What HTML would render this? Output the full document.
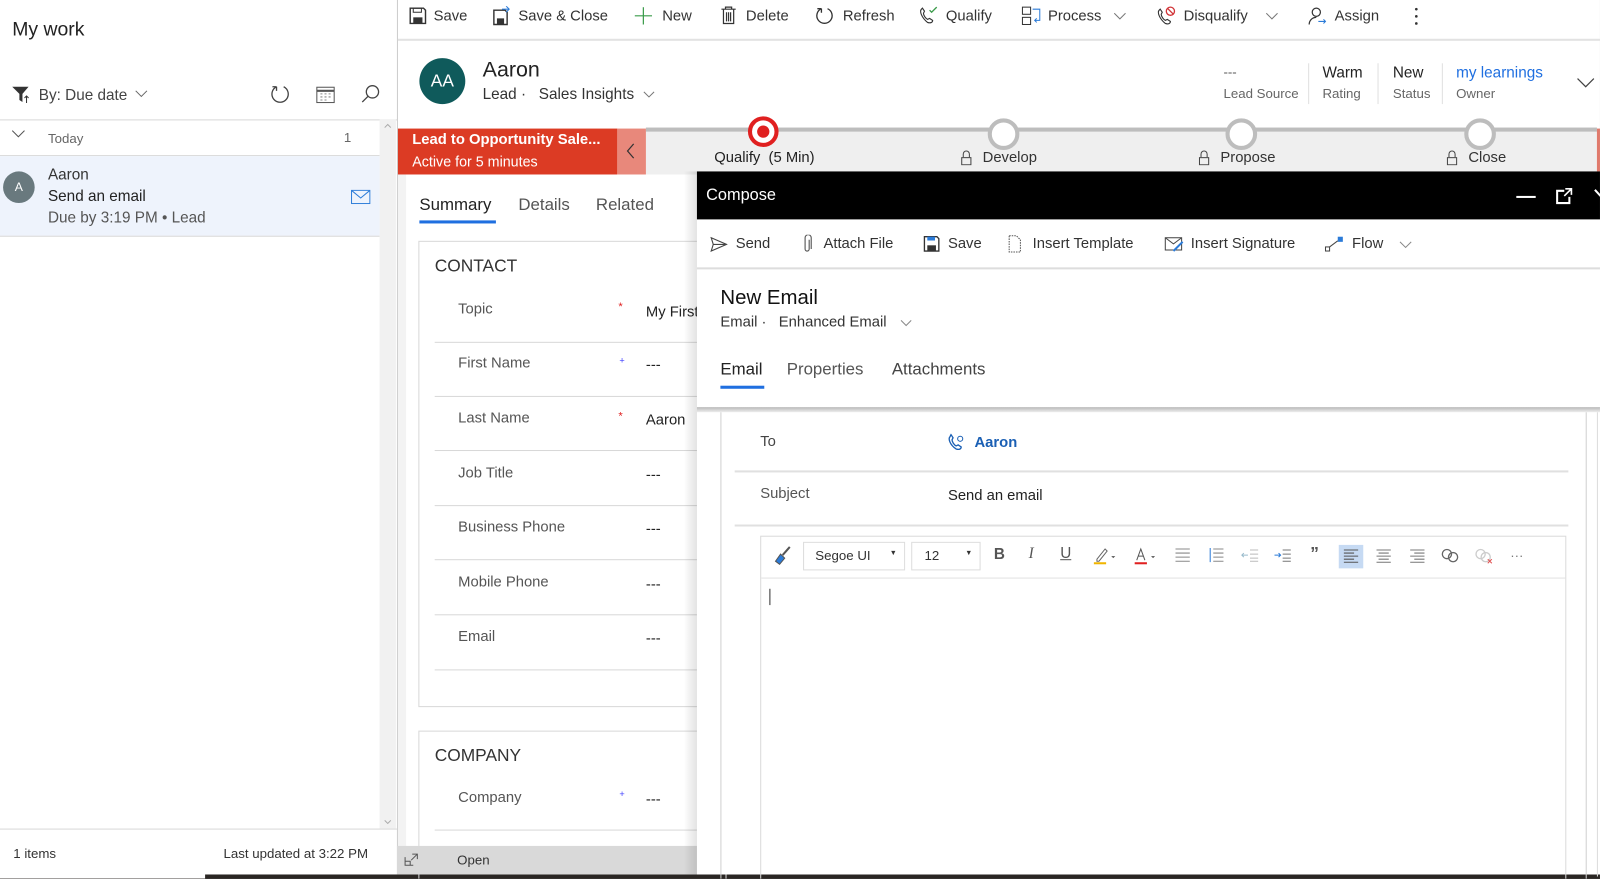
<!DOCTYPE html>
<html><head><meta charset="utf-8"><style>
html,body{margin:0;padding:0;width:1600px;height:879px;overflow:hidden;background:#2a2623}
#w{position:absolute;left:0;top:0;width:1568px;height:861px;transform:scale(1.0204);transform-origin:0 0;background:#fff;font-family:"Liberation Sans",sans-serif;color:#333;overflow:hidden}
.a{position:absolute;white-space:nowrap}
.hl{position:absolute;height:1px;background:#d8d8d8}
.vl{position:absolute;width:1px;background:#d8d8d8}
.tb{font-size:14.5px;color:#333}
.lab{font-size:14.5px;color:#555}
.val{font-size:14.5px;color:#222}
svg{position:absolute}
.cv{display:inline-block;position:relative;width:11px;height:7px;margin-left:4px;vertical-align:middle}
.cv svg{left:0;top:0}
</style></head><body><div id="w">

<!-- LEFT PANEL -->
<div class="a" style="left:12px;top:19px;font-size:19px;color:#222">My work</div>
<svg style="left:11px;top:84px" width="20" height="18" viewBox="0 0 20 18"><path d="M1 1h16l-6 7v8l-3-2V8z" fill="#333"/><path d="M15 17V10m-2 2l2-2 2 2" stroke="#333" fill="none"/></svg>
<div class="a" style="left:38px;top:85px;font-size:15px;color:#444">By: Due date</div>
<svg style="left:132px;top:88px" width="13" height="8" viewBox="0 0 13 8"><path d="M1 1l5.5 5.5L12 1" fill="none" stroke="#666"/></svg>
<svg style="left:264px;top:82px" width="22" height="22" viewBox="0 0 22 22"><path d="M7 3A8 8 0 1 0 14 3" stroke="#444" fill="none" stroke-width="1.3"/><path d="M7 3v4M7 3H3" stroke="#444" fill="none" stroke-width="1.3"/></svg>
<svg style="left:309px;top:83px" width="20" height="19" viewBox="0 0 20 19"><rect x="1.5" y="2.5" width="17" height="15" fill="none" stroke="#555"/><path d="M1.5 6h17" stroke="#555" stroke-width="2"/><path d="M5 9h2M9 9h2M13 9h2M5 12h2M9 12h2M13 12h2M5 15h2M9 15h2" stroke="#888"/></svg>
<svg style="left:353px;top:82px" width="20" height="20" viewBox="0 0 20 20"><circle cx="12" cy="8" r="6" fill="none" stroke="#444" stroke-width="1.3"/><path d="M8 12L2 18" stroke="#444" stroke-width="1.3"/></svg>
<div class="hl" style="left:0;top:117px;width:389px"></div>
<svg style="left:11px;top:127px" width="14" height="9" viewBox="0 0 14 9"><path d="M1 1l6 6 6-6" fill="none" stroke="#555"/></svg>
<div class="a" style="left:47px;top:128px;font-size:13px;color:#666">Today</div>
<div class="a" style="left:337px;top:127px;font-size:13px;color:#666">1</div>
<div class="hl" style="left:0;top:152px;width:372px"></div>
<div class="a" style="left:0;top:153px;width:372px;height:78px;background:#eef3fc"></div>
<div class="hl" style="left:0;top:231px;width:372px"></div>
<div class="a" style="left:3px;top:168px;width:31px;height:31px;border-radius:50%;background:#69797e;color:#fff;font-size:12px;text-align:center;line-height:31px">A</div>
<div class="a" style="left:47px;top:163px;font-size:15px;color:#333">Aaron</div>
<div class="a" style="left:47px;top:184px;font-size:15px;color:#222">Send an email</div>
<div class="a" style="left:47px;top:205px;font-size:15px;color:#555">Due by 3:19 PM &bull; Lead</div>
<svg style="left:344px;top:186px" width="19" height="14" viewBox="0 0 19 14"><rect x=".5" y=".5" width="18" height="13" fill="none" stroke="#2b7bd8"/><path d="M1 1l8.5 7L18 1" fill="none" stroke="#2b7bd8"/></svg>
<div class="a" style="left:372px;top:117px;width:16px;height:695px;background:#f1f1f1"></div>
<svg style="left:376px;top:121px" width="8" height="5" viewBox="0 0 8 5"><path d="M1 4l3-3 3 3" fill="none" stroke="#aaa"/></svg>
<svg style="left:376px;top:803px" width="8" height="5" viewBox="0 0 8 5"><path d="M1 1l3 3 3-3" fill="none" stroke="#aaa"/></svg>
<div class="hl" style="left:0;top:812px;width:389px"></div>
<div class="a" style="left:13px;top:829px;font-size:13px;color:#333">1 items</div>
<div class="a" style="left:219px;top:829px;font-size:13px;color:#333">Last updated at 3:22 PM</div>
<div class="a" style="left:201px;top:857px;width:1367px;height:4px;background:#2a2623"></div>
<div class="vl" style="left:389px;top:0;height:857px;background:#ccc"></div>

<!-- TOP TOOLBAR -->
<div class="a" style="left:390px;top:38px;width:1178px;height:2px;background:#e2e2e2"></div>
<svg style="left:401px;top:7px" width="17" height="17" viewBox="0 0 17 17"><path d="M1 1h13l2 2v13H1z" fill="none" stroke="#333" stroke-width="1.4"/><rect x="4" y="10" width="9" height="6" fill="#333"/><rect x="4" y="1" width="8" height="4" fill="none" stroke="#333"/></svg>
<div class="a tb" style="left:425px;top:8px">Save</div>
<svg style="left:483px;top:6px" width="18" height="19" viewBox="0 0 18 19"><path d="M1 4h11l2 2v12H1z" fill="none" stroke="#333" stroke-width="1.4"/><rect x="4" y="12" width="7" height="6" fill="#333"/><path d="M9 3h7M13 0l3 3-3 3" stroke="#2b7bd8" fill="none"/></svg>
<div class="a tb" style="left:508px;top:8px">Save &amp; Close</div>
<svg style="left:622px;top:7px" width="17" height="17" viewBox="0 0 17 17"><path d="M8.5 0v17M0 8.5h17" stroke="#3a9b4a" stroke-width="1.2"/></svg>
<div class="a tb" style="left:649px;top:8px">New</div>
<svg style="left:706px;top:6px" width="16" height="18" viewBox="0 0 16 18"><path d="M1 3h14M5 3V1h6v2M3 3v14h10V3M6 6v9M8 6v9M10 6v9" fill="none" stroke="#333" stroke-width="1.2"/></svg>
<div class="a tb" style="left:731px;top:8px">Delete</div>
<svg style="left:799px;top:6px" width="19" height="19" viewBox="0 0 19 19"><path d="M6 2.5A7.5 7.5 0 1 0 12 2.5" stroke="#333" fill="none" stroke-width="1.3"/><path d="M6 2.5v4M6 2.5H2" stroke="#333" fill="none" stroke-width="1.3"/></svg>
<div class="a tb" style="left:826px;top:8px">Refresh</div>
<svg style="left:900px;top:6px" width="20" height="19" viewBox="0 0 20 19"><path d="M3 3c-2 2 0 8 6 13 3 1 5 0 5-2l-3-2-2 1c-2-1-4-4-4-6l1-2-2-3z" fill="none" stroke="#333" stroke-width="1.1"/><path d="M11 4l2 2 5-5" stroke="#3a9b4a" fill="none" stroke-width="1.3"/></svg>
<div class="a tb" style="left:927px;top:8px">Qualify</div>
<svg style="left:1001px;top:6px" width="20" height="19" viewBox="0 0 20 19"><rect x="1" y="1" width="8" height="7" fill="none" stroke="#333"/><rect x="1" y="11" width="8" height="7" fill="none" stroke="#333"/><path d="M11 3h7v11h-5M15 12l-2 2 2 2" fill="none" stroke="#2b7bd8"/></svg>
<div class="a tb" style="left:1027px;top:8px">Process</div>
<svg style="left:1091px;top:12px" width="13" height="8" viewBox="0 0 13 8"><path d="M1 1l5.5 5.5L12 1" fill="none" stroke="#777"/></svg>
<svg style="left:1133px;top:6px" width="20" height="19" viewBox="0 0 20 19"><path d="M3 4c-2 2 0 8 6 13 3 1 5 0 5-2l-3-2-2 1c-2-1-4-4-4-6l1-2-2-3z" fill="none" stroke="#333" stroke-width="1.1"/><circle cx="14" cy="5" r="4" fill="none" stroke="#d13438" stroke-width="1.3"/><path d="M11 2l6 6" stroke="#d13438" stroke-width="1.3"/></svg>
<div class="a tb" style="left:1160px;top:8px">Disqualify</div>
<svg style="left:1240px;top:12px" width="13" height="8" viewBox="0 0 13 8"><path d="M1 1l5.5 5.5L12 1" fill="none" stroke="#777"/></svg>
<svg style="left:1282px;top:6px" width="20" height="19" viewBox="0 0 20 19"><circle cx="8" cy="6" r="4" fill="none" stroke="#333" stroke-width="1.2"/><path d="M1 18c0-4 3-7 7-7" fill="none" stroke="#333" stroke-width="1.2"/><path d="M10 15h7M15 13l2 2-2 2" fill="none" stroke="#2b7bd8"/></svg>
<div class="a tb" style="left:1308px;top:8px">Assign</div>
<svg style="left:1386px;top:7px" width="4" height="18" viewBox="0 0 4 18"><circle cx="2" cy="2" r="1.3" fill="#333"/><circle cx="2" cy="9" r="1.3" fill="#333"/><circle cx="2" cy="16" r="1.3" fill="#333"/></svg>

<!-- HEADER -->
<div class="a" style="left:411px;top:57px;width:45px;height:45px;border-radius:50%;background:#0f5a5b;color:#fff;font-size:17px;text-align:center;line-height:45px">AA</div>
<div class="a" style="left:473px;top:57px;font-size:21px;color:#222">Aaron</div>
<div class="a" style="left:473px;top:84px;font-size:15px;color:#333">Lead &middot;&nbsp;&nbsp; Sales Insights</div>
<svg style="left:630px;top:89px" width="12" height="7" viewBox="0 0 12 7"><path d="M1 1l5 5 5-5" fill="none" stroke="#777"/></svg>
<div class="a" style="left:1199px;top:63px;font-size:13px;color:#555">---</div>
<div class="a" style="left:1199px;top:84px;font-size:13px;color:#666">Lead Source</div>
<div class="vl" style="left:1282px;top:62px;height:40px;background:#e0e0e0"></div>
<div class="a" style="left:1296px;top:63px;font-size:15px;color:#222">Warm</div>
<div class="a" style="left:1296px;top:84px;font-size:13px;color:#666">Rating</div>
<div class="vl" style="left:1350px;top:62px;height:40px;background:#e0e0e0"></div>
<div class="a" style="left:1365px;top:63px;font-size:15px;color:#222">New</div>
<div class="a" style="left:1365px;top:84px;font-size:13px;color:#666">Status</div>
<div class="vl" style="left:1413px;top:62px;height:40px;background:#e0e0e0"></div>
<div class="a" style="left:1427px;top:63px;font-size:15px;color:#1f6fe0">my learnings</div>
<div class="a" style="left:1427px;top:84px;font-size:13px;color:#666">Owner</div>
<svg style="left:1545px;top:75px" width="18" height="12" viewBox="0 0 18 12"><path d="M1 2l8 8 8-8" fill="none" stroke="#444" stroke-width="1.2"/></svg>

<!-- BPF -->
<div class="a" style="left:633px;top:126px;width:932px;height:45px;background:#efefef"></div>
<div class="a" style="left:633px;top:125px;width:932px;height:4px;background:#bdbdbd"></div>
<div class="a" style="left:1565px;top:126px;width:3px;height:45px;background:#e07a6c"></div>
<div class="a" style="left:390px;top:126px;width:215px;height:45px;background:#dc3b24"></div>
<div class="a" style="left:404px;top:129px;font-size:14.5px;color:#fff;font-weight:bold">Lead to Opportunity Sale...</div>
<div class="a" style="left:404px;top:150px;font-size:14px;color:#fff">Active for 5 minutes</div>
<div class="a" style="left:605px;top:126px;width:28px;height:45px;background:#e8887b"></div>
<svg style="left:613px;top:140px" width="10" height="16" viewBox="0 0 10 16"><path d="M8 1L2 8l6 7" fill="none" stroke="#333" stroke-width="1.2"/></svg>
<div class="a" style="left:733px;top:114px;width:22px;height:22px;border-radius:50%;border:4px solid #e02020;background:#fff"></div>
<div class="a" style="left:742px;top:123px;width:12px;height:12px;border-radius:50%;background:#e02020"></div>
<div class="a" style="left:700px;top:147px;font-size:14.5px;color:#222">Qualify&nbsp; (5 Min)</div>
<div class="a" style="left:968px;top:116px;width:23px;height:23px;border-radius:50%;border:4px solid #bdbdbd;background:#fff"></div>
<div class="a" style="left:1201px;top:116px;width:23px;height:23px;border-radius:50%;border:4px solid #bdbdbd;background:#fff"></div>
<div class="a" style="left:1435px;top:116px;width:23px;height:23px;border-radius:50%;border:4px solid #bdbdbd;background:#fff"></div>
<svg style="left:941px;top:147px" width="12" height="15" viewBox="0 0 12 15"><path d="M3 7V4a3 3 0 0 1 6 0v3" fill="none" stroke="#444"/><rect x="1.5" y="7.5" width="9" height="7" fill="none" stroke="#444"/></svg>
<div class="a" style="left:963px;top:147px;font-size:14.5px;color:#333">Develop</div>
<svg style="left:1174px;top:147px" width="12" height="15" viewBox="0 0 12 15"><path d="M3 7V4a3 3 0 0 1 6 0v3" fill="none" stroke="#444"/><rect x="1.5" y="7.5" width="9" height="7" fill="none" stroke="#444"/></svg>
<div class="a" style="left:1196px;top:147px;font-size:14.5px;color:#333">Propose</div>
<svg style="left:1417px;top:147px" width="12" height="15" viewBox="0 0 12 15"><path d="M3 7V4a3 3 0 0 1 6 0v3" fill="none" stroke="#444"/><rect x="1.5" y="7.5" width="9" height="7" fill="none" stroke="#444"/></svg>
<div class="a" style="left:1439px;top:147px;font-size:14.5px;color:#333">Close</div>

<!-- FORM -->
<div class="a" style="left:390px;top:171px;width:8px;height:658px;background:#f3f3f3"></div>
<div class="a" style="left:411px;top:192px;font-size:16.5px;color:#222">Summary</div>
<div class="a" style="left:411px;top:216px;width:75px;height:3px;background:#1f6fe0"></div>
<div class="a" style="left:508px;top:192px;font-size:16.5px;color:#555">Details</div>
<div class="a" style="left:584px;top:192px;font-size:16.5px;color:#555">Related</div>
<div class="a" style="left:410px;top:236px;width:300px;height:455px;border:1px solid #d8d8d8"></div>
<div class="a" style="left:426px;top:251px;font-size:17px;color:#333">CONTACT</div>
<div class="a lab" style="left:449px;top:295px">Topic</div><div class="a" style="left:606px;top:295px;color:#e02020;font-size:11px">*</div><div class="a val" style="left:633px;top:298px">My First</div>
<div class="hl" style="left:426px;top:335px;width:270px"></div>
<div class="a lab" style="left:449px;top:348px">First Name</div><div class="a" style="left:607px;top:348px;color:#4040ff;font-size:9px">+</div><div class="a val" style="left:633px;top:350px">---</div>
<div class="hl" style="left:426px;top:388px;width:270px"></div>
<div class="a lab" style="left:449px;top:402px">Last Name</div><div class="a" style="left:606px;top:402px;color:#e02020;font-size:11px">*</div><div class="a val" style="left:633px;top:404px">Aaron</div>
<div class="hl" style="left:426px;top:441px;width:270px"></div>
<div class="a lab" style="left:449px;top:456px">Job Title</div><div class="a val" style="left:633px;top:458px">---</div>
<div class="hl" style="left:426px;top:495px;width:270px"></div>
<div class="a lab" style="left:449px;top:509px">Business Phone</div><div class="a val" style="left:633px;top:511px">---</div>
<div class="hl" style="left:426px;top:548px;width:270px"></div>
<div class="a lab" style="left:449px;top:563px">Mobile Phone</div><div class="a val" style="left:633px;top:565px">---</div>
<div class="hl" style="left:426px;top:602px;width:270px"></div>
<div class="a lab" style="left:449px;top:616px">Email</div><div class="a val" style="left:633px;top:618px">---</div>
<div class="hl" style="left:426px;top:656px;width:270px"></div>
<div class="a" style="left:410px;top:716px;width:300px;height:150px;border:1px solid #d8d8d8"></div>
<div class="a" style="left:426px;top:731px;font-size:17px;color:#333">COMPANY</div>
<div class="a lab" style="left:449px;top:774px">Company</div><div class="a" style="left:607px;top:773px;color:#4040ff;font-size:9px">+</div><div class="a val" style="left:633px;top:776px">---</div>
<div class="hl" style="left:426px;top:813px;width:270px"></div>
<div class="a" style="left:389px;top:829px;width:295px;height:28px;background:#d9d9d9"></div>
<svg style="left:396px;top:836px" width="14" height="13" viewBox="0 0 14 13"><path d="M1 4v8h8M1 8h5v4M8 1h5v5M13 1L7 7" fill="none" stroke="#555"/></svg>
<div class="a" style="left:448px;top:835px;font-size:13px;color:#333">Open</div>

<!-- COMPOSE -->
<div class="a" style="left:670px;top:168px;width:14px;height:689px;background:linear-gradient(to right,rgba(0,0,0,0),rgba(0,0,0,.12))"></div>
<div class="a" style="left:683px;top:168px;width:885px;height:689px;background:#fff"></div>
<div class="a" style="left:683px;top:168px;width:885px;height:47px;background:#000"></div>
<div class="a" style="left:692px;top:183px;font-size:16px;color:#fff">Compose</div>
<div class="a" style="left:1486px;top:192px;width:19px;height:2px;background:#fff"></div>
<svg style="left:1524px;top:184px" width="18" height="17" viewBox="0 0 18 17"><path d="M9 3H2v12h12V9" fill="none" stroke="#fff" stroke-width="2"/><path d="M10 1h6v6M16 1l-7 7" fill="none" stroke="#fff" stroke-width="1.6"/></svg>
<svg style="left:1562px;top:184px" width="8" height="17" viewBox="0 0 8 17"><path d="M1 2l12 13" stroke="#fff" stroke-width="2"/></svg>
<div class="a" style="left:683px;top:262px;width:885px;height:2px;background:#ddd"></div>
<svg style="left:696px;top:232px" width="17" height="15" viewBox="0 0 17 15"><path d="M1 1l15 6.5L1 14l2-6.5z M3 7.5h13" fill="none" stroke="#444" stroke-width="1.1"/></svg>
<div class="a tb" style="left:721px;top:231px">Send</div>
<svg style="left:786px;top:230px" width="10" height="19" viewBox="0 0 10 19"><path d="M7 5v9a2 2 0 0 1-4 0V3a3 3 0 0 1 6 0v11" fill="none" stroke="#555" stroke-width="1.1"/></svg>
<div class="a tb" style="left:807px;top:231px">Attach File</div>
<svg style="left:905px;top:231px" width="16" height="16" viewBox="0 0 17 17"><path d="M1 1h13l2 2v13H1z" fill="none" stroke="#333" stroke-width="1.4"/><rect x="4" y="10" width="9" height="6" fill="#333"/><rect x="4" y="1" width="8" height="4" fill="#2b7bd8"/></svg>
<div class="a tb" style="left:929px;top:231px">Save</div>
<svg style="left:988px;top:230px" width="13" height="18" viewBox="0 0 13 18"><path d="M1 1h7l4 4v12H1z" fill="none" stroke="#555" stroke-dasharray="1.5 1"/></svg>
<div class="a tb" style="left:1012px;top:231px">Insert Template</div>
<svg style="left:1141px;top:231px" width="20" height="17" viewBox="0 0 20 17"><rect x="1" y="2" width="16" height="12" fill="none" stroke="#444"/><path d="M1 2l8 6 8-6" fill="none" stroke="#444"/><path d="M9 15l9-9" stroke="#2b7bd8" stroke-width="2"/></svg>
<div class="a tb" style="left:1167px;top:231px">Insert Signature</div>
<svg style="left:1298px;top:231px" width="19" height="16" viewBox="0 0 19 16"><rect x="1" y="11" width="4" height="4" fill="none" stroke="#444"/><rect x="13" y="1" width="5" height="5" fill="#2b7bd8"/><path d="M5 11l8-6" stroke="#444"/></svg>
<div class="a tb" style="left:1325px;top:231px">Flow</div>
<svg style="left:1371px;top:236px" width="13" height="8" viewBox="0 0 13 8"><path d="M1 1l5.5 5.5L12 1" fill="none" stroke="#888"/></svg>

<div class="a" style="left:706px;top:281px;font-size:20px;color:#111">New Email</div>
<div class="a" style="left:706px;top:308px;font-size:14.5px;color:#333">Email &middot;&nbsp;&nbsp; Enhanced Email</div>
<svg style="left:882px;top:313px" width="12" height="7" viewBox="0 0 12 7"><path d="M1 1l5 5 5-5" fill="none" stroke="#888"/></svg>
<div class="a" style="left:706px;top:353px;font-size:16.5px;color:#222">Email</div>
<div class="a" style="left:706px;top:378px;width:43px;height:3px;background:#1f6fe0"></div>
<div class="a" style="left:771px;top:353px;font-size:16.5px;color:#555">Properties</div>
<div class="a" style="left:874px;top:353px;font-size:16.5px;color:#444">Attachments</div>
<div class="a" style="left:683px;top:399px;width:885px;height:5px;background:linear-gradient(#b8b8b8,#eee)"></div>
<div class="a" style="left:706px;top:404px;width:847px;height:470px;border-left:1px solid #d0d0d0;border-right:1px solid #d0d0d0"></div>
<div class="vl" style="left:1565px;top:404px;height:455px;background:#ddd"></div>
<div class="a" style="left:745px;top:425px;font-size:14.5px;color:#444">To</div>
<svg style="left:928px;top:425px" width="18" height="17" viewBox="0 0 18 17"><path d="M3 3c-2 2 0 8 6 12 3 1 5 0 5-2l-3-2-2 1c-2-1-4-4-4-6l1-2-2-3z" fill="none" stroke="#1a5fb4" stroke-width="1.3"/><circle cx="13" cy="5" r="2.5" fill="none" stroke="#1a5fb4"/></svg>
<div class="a" style="left:955px;top:426px;font-size:14.5px;color:#1a5fb4;font-weight:bold">Aaron</div>
<div class="hl" style="left:720px;top:461px;width:817px;background:#e0e0e0;height:2px"></div>
<div class="a" style="left:745px;top:476px;font-size:14.5px;color:#555">Subject</div>
<div class="a" style="left:929px;top:478px;font-size:14.5px;color:#222">Send an email</div>
<div class="hl" style="left:720px;top:514px;width:817px;background:#e0e0e0;height:2px"></div>

<!-- editor -->
<div class="a" style="left:745px;top:525px;width:788px;height:340px;border:1px solid #dadada"></div>
<div class="hl" style="left:746px;top:566px;width:788px;background:#e2e2e2"></div>
<svg style="left:759px;top:535px" width="18" height="19" viewBox="0 0 18 19"><path d="M15 1l-7 8" stroke="#555" stroke-width="2"/><path d="M6 8l4 4-5 6-4-3z" fill="#2b7bd8" stroke="#555"/></svg>
<div class="a" style="left:787px;top:531px;width:98px;height:26px;border:1px solid #ddd"></div>
<div class="a" style="left:799px;top:537px;font-size:13px;color:#333">Segoe UI</div>
<div class="a" style="left:872px;top:539px;font-size:7px;color:#333">&#9660;</div>
<div class="a" style="left:893px;top:531px;width:66px;height:26px;border:1px solid #ddd"></div>
<div class="a" style="left:906px;top:537px;font-size:13px;color:#333">12</div>
<div class="a" style="left:946px;top:539px;font-size:7px;color:#333">&#9660;</div>
<div class="a" style="left:974px;top:535px;font-size:15px;color:#555;font-weight:bold">B</div>
<div class="a" style="left:1008px;top:535px;font-size:15px;color:#555;font-style:italic;font-family:'Liberation Serif',serif">I</div>
<div class="a" style="left:1039px;top:534px;font-size:15px;color:#555;text-decoration:underline">U</div>
<svg style="left:1071px;top:535px" width="26" height="20" viewBox="0 0 26 20"><path d="M4 13l8-10 2 2-8 10H4z" fill="none" stroke="#666"/><rect x="1" y="16" width="12" height="2" fill="#f0b400"/><path d="M18 10l2 2 2-2z" fill="#555"/></svg>
<svg style="left:1111px;top:535px" width="26" height="20" viewBox="0 0 26 20"><path d="M3 14l4-11 4 11M4.5 10h5" fill="none" stroke="#555"/><rect x="1" y="16" width="12" height="2" fill="#e02020"/><path d="M17 10l2 2 2-2z" fill="#555"/></svg>
<svg style="left:1151px;top:537px" width="16" height="14" viewBox="0 0 16 14"><path d="M1 1h14M1 5h14M1 9h14M1 13h14" stroke="#888"/></svg>
<svg style="left:1184px;top:537px" width="16" height="14" viewBox="0 0 16 14"><path d="M5 1h10M5 5h10M5 9h10M5 13h10" stroke="#888"/><path d="M2 0v14" stroke="#2b7bd8"/></svg>
<svg style="left:1216px;top:538px" width="18" height="13" viewBox="0 0 18 13"><path d="M9 1h8M9 5h8M9 9h8M9 12h8" stroke="#bbb"/><path d="M7 6H1M3 4L1 6l2 2" stroke="#9bc" fill="none"/></svg>
<svg style="left:1248px;top:538px" width="18" height="13" viewBox="0 0 18 13"><path d="M9 1h8M9 5h8M9 9h8M9 12h8" stroke="#777"/><path d="M1 6h6M5 4l2 2-2 2" stroke="#2b7bd8" fill="none"/></svg>
<div class="a" style="left:1284px;top:533px;font-size:17px;color:#555;font-weight:bold">&#8221;</div>
<div class="a" style="left:1312px;top:534px;width:24px;height:23px;background:#c6daf3"></div>
<svg style="left:1316px;top:538px" width="16" height="14" viewBox="0 0 16 14"><path d="M1 1h14M1 4h10M1 7h14M1 10h10M1 13h14" stroke="#555"/></svg>
<svg style="left:1348px;top:538px" width="16" height="14" viewBox="0 0 16 14"><path d="M1 1h14M3 4h10M1 7h14M3 10h10M1 13h14" stroke="#777"/></svg>
<svg style="left:1381px;top:538px" width="16" height="14" viewBox="0 0 16 14"><path d="M1 1h14M5 4h10M1 7h14M5 10h10M1 13h14" stroke="#777"/></svg>
<svg style="left:1412px;top:537px" width="19" height="15" viewBox="0 0 19 15"><circle cx="6" cy="6" r="4.5" fill="none" stroke="#666" stroke-width="1.3"/><circle cx="12" cy="9" r="4.5" fill="none" stroke="#666" stroke-width="1.3"/></svg>
<svg style="left:1445px;top:537px" width="19" height="16" viewBox="0 0 19 16"><circle cx="6" cy="6" r="4.5" fill="none" stroke="#ccc" stroke-width="1.3"/><circle cx="11" cy="9" r="4.5" fill="none" stroke="#ccc" stroke-width="1.3"/><path d="M13 11l4 4M17 11l-4 4" stroke="#e05050"/></svg>
<div class="a" style="left:1480px;top:537px;font-size:13px;color:#777">&middot;&middot;&middot;</div>
<div class="a" style="left:754px;top:577px;width:1px;height:16px;background:#333"></div>

</div></body></html>
